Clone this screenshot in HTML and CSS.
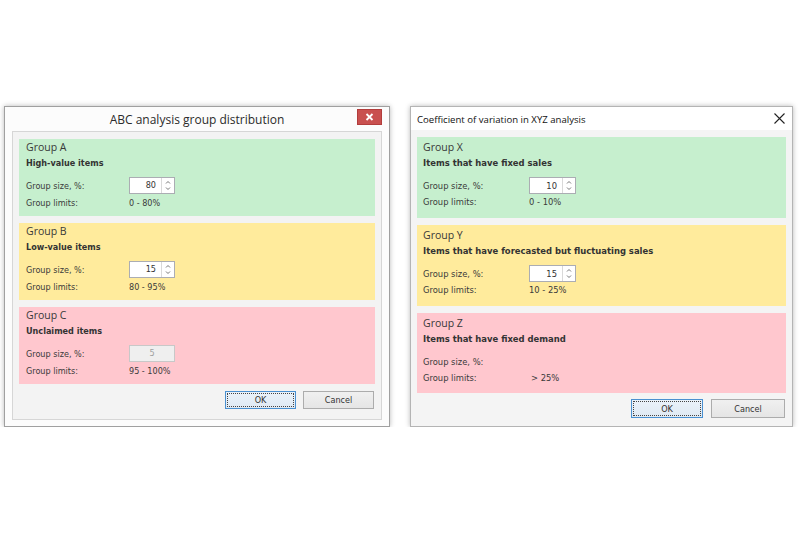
FILE: index.html
```html
<!DOCTYPE html>
<html>
<head>
<meta charset="utf-8">
<link rel="stylesheet" href="styles.css">
</head>
<body>
<div class="desk">
  <div class="win win-abc">
    <div class="titlebar">
      <span></span>
      <span class="title">ABC analysis group distribution</span>
      <span class="close-red"><svg width="9" height="8" viewBox="0 0 9 8"><path d="M1.5 1 L7.5 7 M7.5 1 L1.5 7" stroke="#fff" stroke-width="1.8"/></svg></span>
    </div>
    <div class="client">
      <section class="grp green">
        <div class="gname">Group A</div>
        <div class="gdesc">High-value items</div>
        <div class="rows">
          <span class="lbl">Group size, %:</span>
          <span class="spin"><span class="val">80</span><span class="arrows"><svg width="10" height="13" viewBox="0 0 10 13"><path d="M3 4.5 L5 2.5 L7 4.5 M3 8.5 L5 10.5 L7 8.5" fill="none" stroke="#777" stroke-width="1"/></svg></span></span>
          <span class="lbl">Group limits:</span>
          <span class="lim">0 - 80%</span>
        </div>
      </section>
      <section class="grp yellow">
        <div class="gname">Group B</div>
        <div class="gdesc">Low-value items</div>
        <div class="rows">
          <span class="lbl">Group size, %:</span>
          <span class="spin"><span class="val">15</span><span class="arrows"><svg width="10" height="13" viewBox="0 0 10 13"><path d="M3 4.5 L5 2.5 L7 4.5 M3 8.5 L5 10.5 L7 8.5" fill="none" stroke="#777" stroke-width="1"/></svg></span></span>
          <span class="lbl">Group limits:</span>
          <span class="lim">80 - 95%</span>
        </div>
      </section>
      <section class="grp pink">
        <div class="gname">Group C</div>
        <div class="gdesc">Unclaimed items</div>
        <div class="rows">
          <span class="lbl">Group size, %:</span>
          <span class="spin disabled"><span class="val">5</span></span>
          <span class="lbl">Group limits:</span>
          <span class="lim">95 - 100%</span>
        </div>
      </section>
      <div class="btns">
        <span class="btn ok"><span class="focus">OK</span></span>
        <span class="btn">Cancel</span>
      </div>
    </div>
  </div>

  <div class="win win-xyz">
    <div class="titlebar">
      <span class="title">Coefficient of variation in XYZ analysis</span>
      <span class="close-x"><svg width="11" height="11" viewBox="0 0 11 11"><path d="M0.5 0.5 L10.5 10.5 M10.5 0.5 L0.5 10.5" stroke="#222" stroke-width="1.1"/></svg></span>
    </div>
    <div class="client">
      <section class="grp green">
        <div class="gname">Group X</div>
        <div class="gdesc">Items that have fixed sales</div>
        <div class="rows">
          <span class="lbl">Group size, %:</span>
          <span class="spin"><span class="val">10</span><span class="arrows"><svg width="10" height="13" viewBox="0 0 10 13"><path d="M3 4.5 L5 2.5 L7 4.5 M3 8.5 L5 10.5 L7 8.5" fill="none" stroke="#777" stroke-width="1"/></svg></span></span>
          <span class="lbl">Group limits:</span>
          <span class="lim">0 - 10%</span>
        </div>
      </section>
      <section class="grp yellow">
        <div class="gname">Group Y</div>
        <div class="gdesc">Items that have forecasted but fluctuating sales</div>
        <div class="rows">
          <span class="lbl">Group size, %:</span>
          <span class="spin"><span class="val">15</span><span class="arrows"><svg width="10" height="13" viewBox="0 0 10 13"><path d="M3 4.5 L5 2.5 L7 4.5 M3 8.5 L5 10.5 L7 8.5" fill="none" stroke="#777" stroke-width="1"/></svg></span></span>
          <span class="lbl">Group limits:</span>
          <span class="lim">10 - 25%</span>
        </div>
      </section>
      <section class="grp pink">
        <div class="gname">Group Z</div>
        <div class="gdesc">Items that have fixed demand</div>
        <div class="rows">
          <span class="lbl">Group size, %:</span>
          <span class="empty"></span>
          <span class="lbl">Group limits:</span>
          <span class="lim gt">&gt; 25%</span>
        </div>
      </section>
      <div class="btns">
        <span class="btn ok"><span class="focus">OK</span></span>
        <span class="btn">Cancel</span>
      </div>
    </div>
  </div>
</div>
</body>
</html>
```

FILE: styles.css
```css
html, body {
  margin: 0;
  background: #ffffff;
}
body {
  font-family: "DejaVu Sans Condensed", "DejaVu Sans", sans-serif;
  font-stretch: condensed;
  color: #333;
}
.desk {
  display: flex;
  align-items: flex-start;
  padding: 106px 0 0 4px;
  gap: 20px;
}
.win {
  box-sizing: border-box;
  box-shadow: 0 0 5px rgba(0, 0, 0, 0.28);
}

/* ---------- ABC window ---------- */
.win-abc {
  width: 386px;
  border: 1px solid #a0a0a0;
  background: #fcfcfc;
  padding: 0 7px 6px 7px;
}
.win-abc .titlebar {
  height: 24px;
  display: grid;
  grid-template-columns: 1fr auto 1fr;
}
.win-abc .title {
  font-family: "Open Sans", sans-serif;
  font-stretch: normal;
  font-size: 12px;
  line-height: 26px;
  color: #2b2b2b;
  white-space: nowrap;
}
.close-red {
  justify-self: end;
  margin-top: 2px;
  width: 25px;
  height: 16px;
  box-sizing: border-box;
  background: #c9504f;
  border: 1px solid #b23d3c;
  display: flex;
  align-items: center;
  justify-content: center;
}
.win-abc .client {
  border: 1px solid #d6d6d6;
  background: #f3f3f3;
  padding: 7px 6px 10px 6px;
  display: flex;
  flex-direction: column;
  gap: 7px;
}

/* ---------- group panels ---------- */
.grp {
  padding: 1px 7px 6px 7px;
}
.green { background: #c6efce; }
.yellow { background: #ffeb9c; }
.pink { background: #ffc7ce; }

.gname {
  font-family: "Open Sans", sans-serif;
  font-stretch: normal;
  font-size: 10.5px;
  line-height: 14px;
  color: #383838;
}
.gdesc {
  margin-top: 2px;
  font-size: 9px;
  line-height: 14px;
  font-weight: bold;
  color: #333;
}
.rows {
  margin-top: 7px;
  display: grid;
  grid-template-columns: 103px auto;
  grid-template-rows: 17px 14px;
  row-gap: 2px;
  align-items: center;
  justify-items: start;
  font-size: 9px;
  color: #3a3a3a;
}
.lbl, .lim {
  line-height: 14px;
}
.spin {
  display: flex;
  width: 46px;
  height: 17px;
  box-sizing: border-box;
  border: 1px solid #abadb3;
  background: #fff;
}
.spin .val {
  flex: 1;
  text-align: right;
  padding-right: 5px;
  line-height: 15px;
  color: #333;
}
.spin .arrows {
  width: 11px;
  margin: 0 1px 0 0;
  border-left: 1px solid #d9d9d9;
  display: flex;
  align-items: center;
  justify-content: center;
}
.spin.disabled {
  background: #efefef;
  border-color: #c8c8c8;
}
.spin.disabled .val {
  text-align: center;
  padding-right: 0;
  color: #a0a0a0;
}

/* ---------- buttons ---------- */
.btns {
  display: flex;
  justify-content: flex-end;
  gap: 7px;
  padding-right: 1px;
}
.btn {
  box-sizing: border-box;
  width: 71px;
  height: 18px;
  border: 1px solid #acacac;
  background: linear-gradient(#f0f0f0, #e5e5e5);
  font-size: 9px;
  color: #333;
  display: flex;
  align-items: center;
  justify-content: center;
}
.btn.ok {
  border-color: #4a90d0;
  background: linear-gradient(#eaf2fa, #dfe9f3);
  padding: 1px;
}
.btn .focus {
  flex: 1;
  align-self: stretch;
  display: flex;
  align-items: center;
  justify-content: center;
  border: 1px dotted #444;
}

/* ---------- XYZ window ---------- */
.win-xyz {
  width: 383px;
  border: 1px solid #b4b4b4;
  background: #fff;
}
.win-xyz .titlebar {
  height: 23px;
  display: flex;
  align-items: center;
  justify-content: space-between;
  padding: 0 7px 0 6px;
}
.win-xyz .title {
  font-family: "Open Sans", sans-serif;
  font-stretch: normal;
  font-size: 9.6px;
  color: #111;
  padding-top: 2px;
}
.close-x {
  display: flex;
  margin-top: -1px;
}
.win-xyz .client {
  background: #f4f4f4;
  padding: 7px 6px 8px 6px;
  display: flex;
  flex-direction: column;
  gap: 7px;
}
.win-xyz .grp {
  padding: 3px 6px 9px 6px;
}
.win-xyz .grp.pink {
  padding-bottom: 8px;
}
.win-xyz .gdesc {
  font-size: 9.4px;
}
.win-xyz .rows {
  grid-template-columns: 106px auto;
  row-gap: 1px;
  font-size: 9.3px;
}
.win-xyz .spin {
  width: 47px;
}
.win-xyz .gt {
  padding-left: 2px;
}
.win-xyz .btns {
  gap: 8px;
  margin-top: -1px;
}
.win-xyz .btn {
  height: 19px;
  width: 74px;
}
.win-xyz .btn.ok {
  width: 72px;
}
```
